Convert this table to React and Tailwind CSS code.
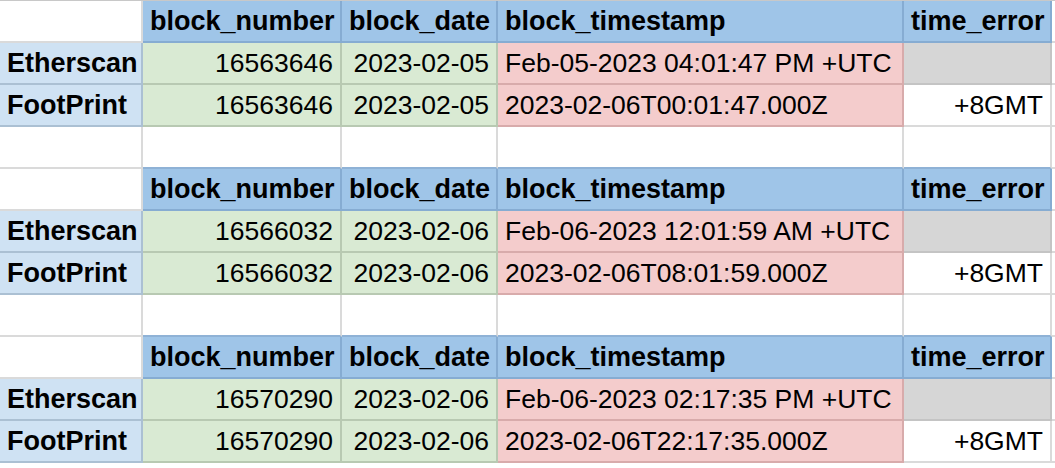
import React from "react";

const blocks = [
  {
    number: "16563646",
    date: "2023-02-05",
    etherscan: "Feb-05-2023 04:01:47 PM +UTC",
    footprint: "2023-02-06T00:01:47.000Z",
  },
  {
    number: "16566032",
    date: "2023-02-06",
    etherscan: "Feb-06-2023 12:01:59 AM +UTC",
    footprint: "2023-02-06T08:01:59.000Z",
  },
  {
    number: "16570290",
    date: "2023-02-06",
    etherscan: "Feb-06-2023 02:17:35 PM +UTC",
    footprint: "2023-02-06T22:17:35.000Z",
  },
];

const headers = ["block_number", "block_date", "block_timestamp", "time_error"];

function Cell({ children, className = "", right, bold }) {
  return (
    <div
      className={`h-[42px] border-r-2 border-b-2 px-[7px] flex items-center overflow-hidden whitespace-nowrap ${
        right ? "justify-end" : "justify-start"
      } ${bold ? "font-bold text-[27px]" : "text-[26.5px]"} ${className}`}
    >
      {children}
    </div>
  );
}

function Block({ block, last }) {
  return (
    <>
      <Cell className="bg-white border-[#dadada]" />
      {headers.map((h) => (
        <Cell key={h} bold className="bg-[#9fc5e8] border-[#86acd2]">
          {h}
        </Cell>
      ))}
      <Cell className="bg-white border-[#dadada]" />

      <Cell bold className="bg-[#cfe2f3] border-[#abc0d3]">Etherscan</Cell>
      <Cell right className="bg-[#d9ead3] border-[#b8c9b2]">{block.number}</Cell>
      <Cell right className="bg-[#d9ead3] border-[#b8c9b2]">{block.date}</Cell>
      <Cell className="bg-[#f4cccc] border-[#d8abab]">{block.etherscan}</Cell>
      <Cell className="bg-[#d6d6d6] border-[#c4c4c4]" />
      <Cell className="bg-white border-[#dadada]" />

      <Cell bold className="bg-[#cfe2f3] border-[#abc0d3]">FootPrint</Cell>
      <Cell right className="bg-[#d9ead3] border-[#b8c9b2]">{block.number}</Cell>
      <Cell right className="bg-[#d9ead3] border-[#b8c9b2]">{block.date}</Cell>
      <Cell className="bg-[#f4cccc] border-[#d8abab]">{block.footprint}</Cell>
      <Cell right className="bg-white border-[#dadada]">+8GMT</Cell>
      <Cell className="bg-white border-[#dadada]" />

      {!last && (
        <>
          <Cell className="bg-white border-[#dadada]" />
          <Cell className="bg-white border-[#dadada] border-b-[#8fb2d6]" />
          <Cell className="bg-white border-[#dadada] border-b-[#8fb2d6]" />
          <Cell className="bg-white border-[#dadada] border-b-[#8fb2d6]" />
          <Cell className="bg-white border-[#dadada] border-b-[#8fb2d6]" />
          <Cell className="bg-white border-[#dadada]" />
        </>
      )}
    </>
  );
}

export default function App() {
  return (
    <div className="w-[1055px] h-[468px] overflow-hidden bg-white">
      <div
        className="grid grid-cols-[143px_199px_156px_406px_148px_1fr] border-t border-[#c8c8c8] text-black leading-none"
        style={{ fontFamily: '"Liberation Sans", Arial, sans-serif' }}
      >
        {blocks.map((b, i) => (
          <Block key={b.number} block={b} last={i === blocks.length - 1} />
        ))}
      </div>
    </div>
  );
}
